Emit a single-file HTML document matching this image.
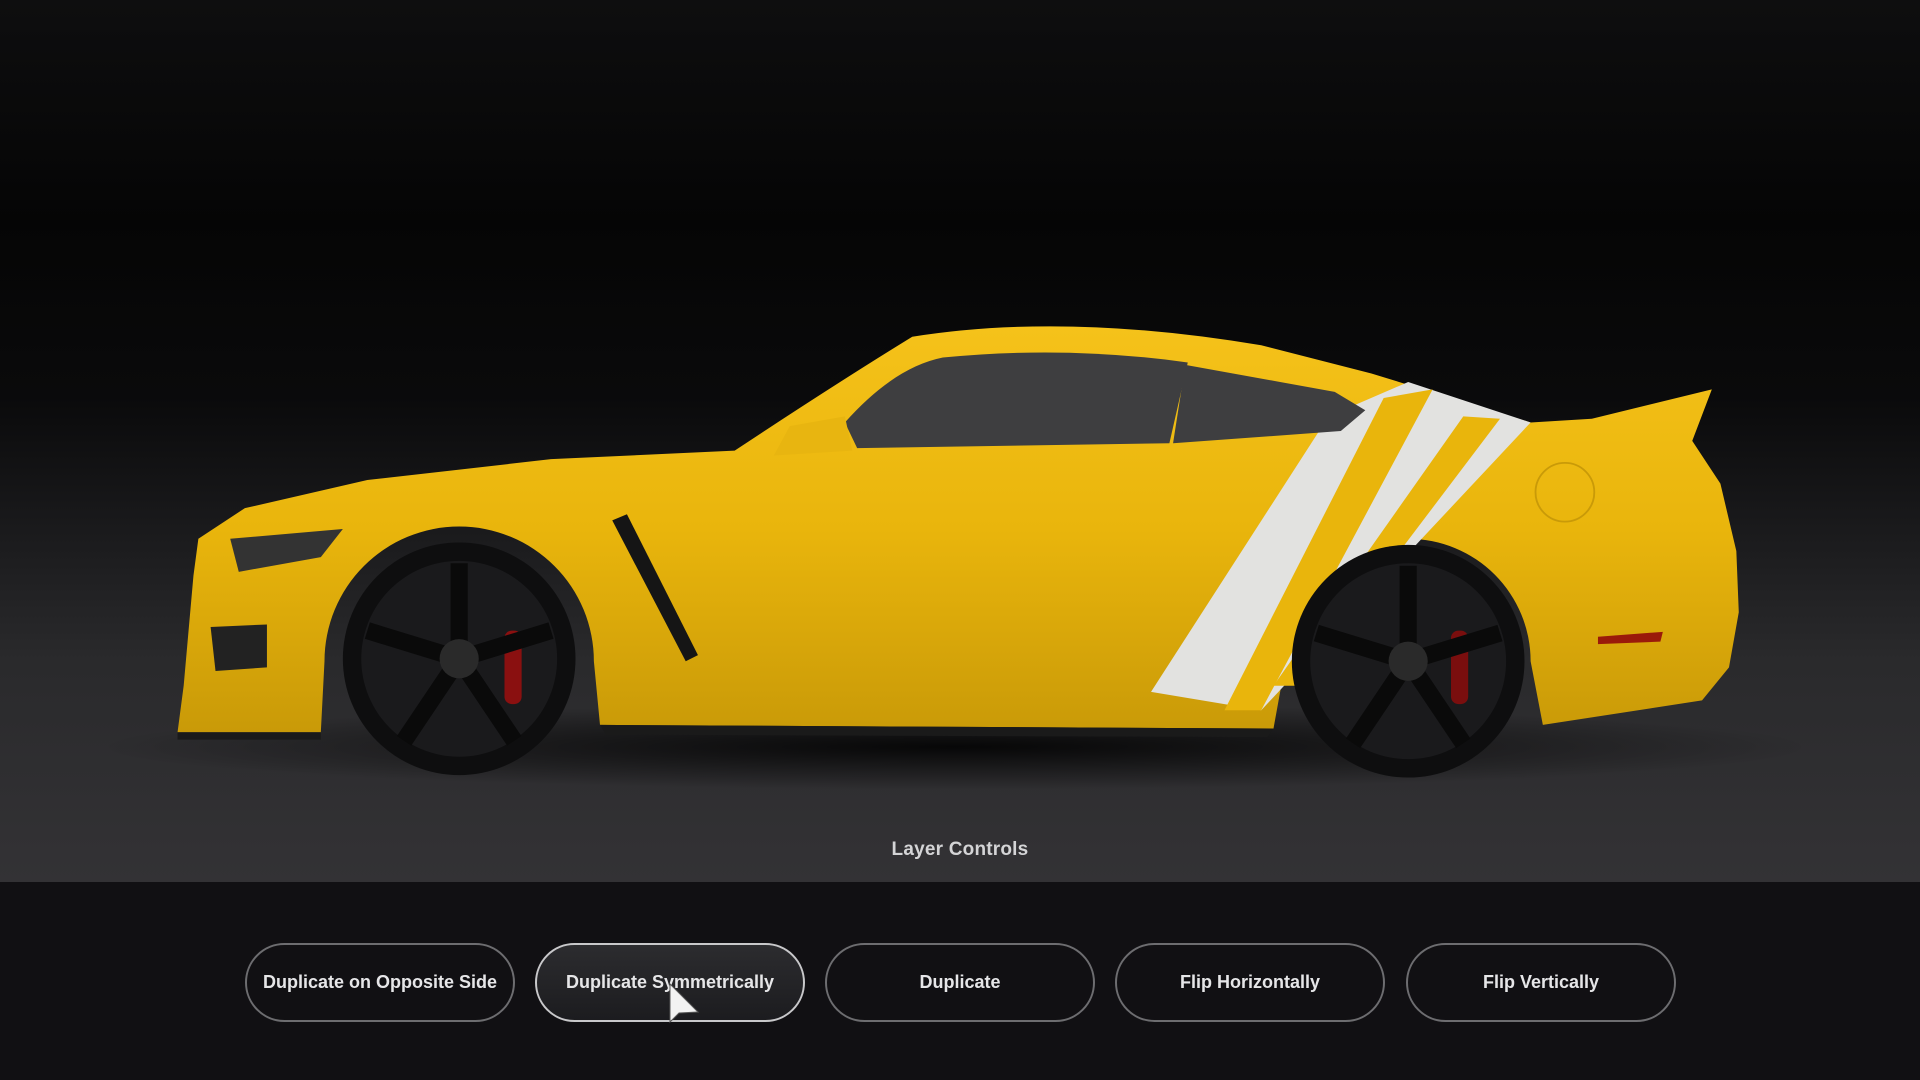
<!DOCTYPE html>
<html><head><meta charset="utf-8"><style>
html,body{margin:0;padding:0;width:1920px;height:1080px;overflow:hidden;background:#000;font-family:"Liberation Sans",sans-serif}
.bg{position:absolute;left:0;top:0;width:1920px;height:882px;background:linear-gradient(#0e0e0f 0%,#050505 25%,#0a0a0b 45%,#1c1c1e 62%,#2a2a2c 75%,#333235 100%)}
.panel{position:absolute;left:0;top:882px;width:1920px;height:198px;background:#111013}
svg{position:absolute;left:0;top:0}
.title{position:absolute;top:839px;width:1920px;text-align:center;color:#d4d4d6;font-size:19px;font-weight:bold;letter-spacing:.2px}
.btn{position:absolute;top:943px;width:270px;height:79px;border:2px solid #6d6d70;border-radius:40px;color:#e6e6e8;font-size:18px;font-weight:bold;display:flex;align-items:center;justify-content:center;box-sizing:border-box;letter-spacing:0}
.sel{background:linear-gradient(#2c2c2f,#1c1c1f);border-color:#c8c8ca}
</style></head><body>
<div class="bg"></div>
<svg width="1920" height="1080" viewBox="0 0 1568 882">
<defs>
<linearGradient id="y" x1="0" y1="0" x2="0" y2="1">
<stop offset="0" stop-color="#f5c21a"/><stop offset=".5" stop-color="#e9b50c"/><stop offset="1" stop-color="#c99a08"/></linearGradient>
<radialGradient id="sh" cx=".5" cy=".5" r=".5"><stop offset="0" stop-color="#000" stop-opacity=".85"/><stop offset="1" stop-color="#000" stop-opacity="0"/></radialGradient>
</defs>
<ellipse cx="780" cy="610" rx="700" ry="35" fill="url(#sh)"/>
<path d="M145,598 L150,560 L158,470 L162,440 L200,415 L300,392 L450,375 L600,368 Q680,315 745,275 Q870,255 1030,282 L1120,305 L1250,345 L1300,342 L1398,318 L1382,360 L1405,395 L1418,450 L1420,500 L1412,545 L1390,572 L1260,592 L1250,540 A100,100 0 0 0 1050,540 L1040,595 L490,592 L485,540 A110,110 0 0 0 265,540 L262,598 Z" fill="url(#y)"/>
<path d="M1085,340 L1150,312 L1250,345 L1030,580 L940,565 Z" fill="#e2e2e0"/>
<path d="M1130,325 L1170,318 L1030,580 L1000,580 Z" fill="#e9b50c"/>
<path d="M1195,340 L1225,342 L1060,560 L1040,560 Z" fill="#e9b50c"/>
<path d="M690,345 Q730,300 770,292 Q870,282 970,296 L955,362 L700,366 Z" fill="#3e3e40"/>
<path d="M968,298 L1090,320 L1115,335 L1095,352 L958,362 Z" fill="#3e3e40"/>
<path d="M632,372 L645,348 L690,340 L696,368 Z" fill="#e8b510"/>
<path d="M490,592 L1040,595 L1035,602 L495,600 Z" fill="#1a1a1a"/>
<path d="M145,598 L262,598 L262,604 L145,604 Z" fill="#1a1a1a"/>
<path d="M500,425 L512,420 L570,535 L560,540 Z" fill="#151515"/>
<path d="M188,440 L280,432 L262,455 L195,467 Z" fill="#333"/>
<path d="M172,512 L218,510 L218,545 L176,548 Z" fill="#222"/>
<circle cx="375" cy="538" r="95" fill="#0e0e0f"/>
<circle cx="375" cy="538" r="80" fill="#1a1a1c"/>
<circle cx="1150" cy="540" r="95" fill="#0e0e0f"/>
<circle cx="1150" cy="540" r="80" fill="#1a1a1c"/>
<rect x="412" y="515" width="14" height="60" rx="6" fill="#8a1010"/>
<rect x="1185" y="515" width="14" height="60" rx="6" fill="#7a0e0e"/>
<g stroke="#0a0a0a" stroke-width="14">
<path d="M375,538 L375,460 M375,538 L450,515 M375,538 L420,605 M375,538 L330,605 M375,538 L300,515"/>
<path d="M1150,540 L1150,462 M1150,540 L1225,517 M1150,540 L1195,607 M1150,540 L1105,607 M1150,540 L1075,517"/>
</g>
<circle cx="375" cy="538" r="16" fill="#2a2a2a"/>
<circle cx="1150" cy="540" r="16" fill="#2a2a2a"/>
<path d="M1305,520 L1358,516 L1356,524 L1305,526 Z" fill="#9a1a0a"/>
<circle cx="1278" cy="402" r="24" fill="none" stroke="#c99a08" stroke-width="1.5"/>
</svg>
<div class="panel"></div>
<div class="title">Layer Controls</div>
<div class="btn" style="left:245px">Duplicate on Opposite Side</div>
<div class="btn sel" style="left:535px">Duplicate Symmetrically</div>
<div class="btn" style="left:825px">Duplicate</div>
<div class="btn" style="left:1115px">Flip Horizontally</div>
<div class="btn" style="left:1406px">Flip Vertically</div>
<svg width="40" height="50" style="left:668px;top:982px" viewBox="0 0 40 50"><path d="M2,2 L2,40 L11,31 L30,30 Z" fill="#f2f2f2" stroke="#555" stroke-width="1"/></svg>
</body></html>
